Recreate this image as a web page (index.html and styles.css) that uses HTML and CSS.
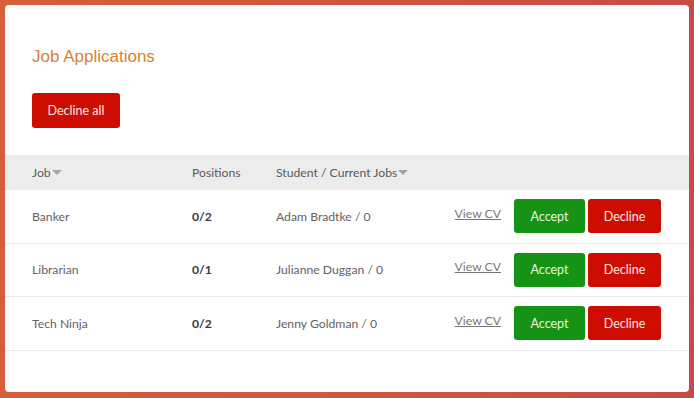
FILE: index.html
```html
<!DOCTYPE html>
<html>
<head>
<meta charset="utf-8">
<link rel="stylesheet" href="styles.css">
</head>
<body>
<div class="card">
  <h2 class="title">Job Applications</h2>
  <button class="btn btn-red btn-all">Decline all</button>
  <div class="table">
    <div class="row head">
      <div class="cell">Job<span class="caret"></span></div>
      <div class="cell">Positions</div>
      <div class="cell">Student / Current Jobs<span class="caret"></span></div>
      <div class="cell"></div>
    </div>
    <div class="row">
      <div class="cell">Banker</div>
      <div class="cell bold">0/2</div>
      <div class="cell">Adam Bradtke / 0</div>
      <div class="cell actions"><a class="cv">View CV</a><button class="btn btn-green">Accept</button><button class="btn btn-red">Decline</button></div>
    </div>
    <div class="row">
      <div class="cell">Librarian</div>
      <div class="cell bold">0/1</div>
      <div class="cell">Julianne Duggan / 0</div>
      <div class="cell actions"><a class="cv">View CV</a><button class="btn btn-green">Accept</button><button class="btn btn-red">Decline</button></div>
    </div>
    <div class="row">
      <div class="cell">Tech Ninja</div>
      <div class="cell bold">0/2</div>
      <div class="cell">Jenny Goldman / 0</div>
      <div class="cell actions"><a class="cv">View CV</a><button class="btn btn-green">Accept</button><button class="btn btn-red">Decline</button></div>
    </div>
  </div>
</div>
</body>
</html>
```
FILE: styles.css
```css
* { box-sizing: border-box; }
html, body { height: 100%; }
body {
  margin: 0;
  padding: 5px 5px 6px 5px;
  background: linear-gradient(90deg, #d55f3a 0%, #cf5540 50%, #c84a47 100%);
  font-family: Lato, "Open Sans", sans-serif;
}
.card {
  background: #fff;
  border-radius: 4px;
  height: 387px;
  padding-top: 40px;
}
.title {
  margin: 0 0 24px 27px;
  font-family: "Liberation Sans", Arial, sans-serif;
  font-weight: normal;
  font-size: 17px;
  line-height: 24px;
  color: #dc7f34;
}
.btn {
  border: none;
  border-radius: 3px;
  color: #fbe9e6;
  font-family: Lato, sans-serif;
  font-size: 12.5px;
  height: 34px;
  padding: 0;
  cursor: pointer;
}
.btn-red { background: #cd0d00; }
.btn-green { background: #149314; color: #e6f6e2; }
.btn-all {
  margin-left: 27px;
  width: 88px;
  height: 35px;
  display: block;
}
.table { margin-top: 27px; }
.row {
  display: grid;
  grid-template-columns: 160px 84px 1fr auto;
  align-items: center;
  padding: 0 28px 0 27px;
  height: 53.5px;
  border-bottom: 1px solid #ececec;
  font-size: 12.2px;
  color: #636363;
}
.row.head {
  height: 35px;
  background: #ececec;
  border-bottom: none;
  color: #5a5a5a;
}
.cell { white-space: nowrap; }
.bold { font-weight: bold; color: #3a3a3a; }
.caret {
  display: inline-block;
  width: 0;
  height: 0;
  border-left: 5px solid transparent;
  border-right: 5px solid transparent;
  border-top: 5px solid #a6a6a6;
  margin-left: 1px;
  vertical-align: 2px;
}
.actions {
  display: flex;
  align-items: center;
  gap: 3px;
}
.cv {
  color: #777;
  text-decoration: underline;
  margin-right: 10px;
  margin-left: 1px;
  margin-top: -6px;
}
.actions .btn-green { width: 71px; }
.actions .btn-red { width: 73px; }
```
